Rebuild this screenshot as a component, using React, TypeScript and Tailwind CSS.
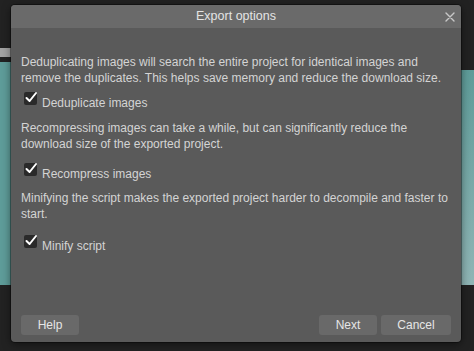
import type { ReactNode } from 'react';

// Dark "Export options" sheet sitting over a dimmed editor window.

function Check({ label }: { label: string }) {
  return (
    <div className="flex items-start pl-[3px]">
      <span className="relative h-[13px] w-[13px] shrink-0 rounded-[2px] bg-[#2a2a2a]">
        <svg
          viewBox="0 0 14 14"
          className="absolute left-[0px] top-[-2px] h-[14px] w-[14px]"
          aria-hidden="true"
        >
          <path
            d="M2.5 8 L5.6 11 L12 3"
            fill="none"
            stroke="#ffffff"
            strokeWidth="2"
            strokeLinecap="round"
            strokeLinejoin="round"
          />
        </svg>
      </span>
      <span className="ml-[5px] mt-[3px] leading-4">{label}</span>
    </div>
  );
}

function Btn({ children, className }: { children: ReactNode; className: string }) {
  return (
    <button
      type="button"
      className={`flex h-5 items-center justify-center rounded-[3px] bg-[#696969] text-[12px] text-[#e6e6e6] ${className}`}
    >
      {children}
    </button>
  );
}

export default function App() {
  return (
    <div
      className="relative h-[351px] w-[474px] overflow-hidden bg-[#222222]"
      style={{ fontFamily: '"Liberation Sans", Arial, sans-serif' }}
    >
      {/* editor content behind the sheet */}
      <div className="absolute left-0 top-[48px] h-[9px] w-[20px] bg-[#a3a3a3]" />
      <div className="absolute left-0 top-[62px] h-[223px] w-[20px] bg-[#5e9c99]" />
      <div className="absolute right-0 top-[70px] h-[215px] w-[20px] bg-gradient-to-b from-[#5e9c99] to-[#8fb5b5]" />

      <div className="absolute left-[11px] top-[5px] flex h-[337px] w-[450px] flex-col overflow-hidden rounded-[4px] bg-[#5a5a5a] shadow-[0_0_0_1px_rgba(0,0,0,0.35),0_2px_8px_rgba(0,0,0,0.5)]">
        <div className="relative flex h-[23px] shrink-0 items-center justify-center bg-[#6a6a6a] text-[12.5px] text-[#e4e4e4]">
          Export options
          <svg
            viewBox="0 0 10 10"
            className="absolute right-[6px] top-[7px] h-[10px] w-[10px]"
            aria-hidden="true"
          >
            <path d="M1 1 L9 9 M9 1 L1 9" stroke="#c8c8c8" strokeWidth="1.4" strokeLinecap="round" />
          </svg>
        </div>

        <div className="flex flex-1 flex-col px-[10px] pt-[26px] pb-[7px] text-[12px] text-[#d4d4d4]">
          <p className="leading-4">
            Deduplicating images will search the entire project for identical images and remove the
            duplicates. This helps save memory and reduce the download size.
          </p>
          <div className="mt-[6px]">
            <Check label="Deduplicate images" />
          </div>
          <p className="mt-[9px] leading-4">
            Recompressing images can take a while, but can significantly reduce the download size of
            the exported project.
          </p>
          <div className="mt-[11px]">
            <Check label="Recompress images" />
          </div>
          <p className="mt-[8px] leading-4">
            Minifying the script makes the exported project harder to decompile and faster to start.
          </p>
          <div className="mt-[13px]">
            <Check label="Minify script" />
          </div>

          <div className="mt-auto flex items-center">
            <Btn className="w-[58px]">Help</Btn>
            <Btn className="ml-auto w-[58px]">Next</Btn>
            <Btn className="ml-[4px] w-[70px]">Cancel</Btn>
          </div>
        </div>
      </div>
    </div>
  );
}
